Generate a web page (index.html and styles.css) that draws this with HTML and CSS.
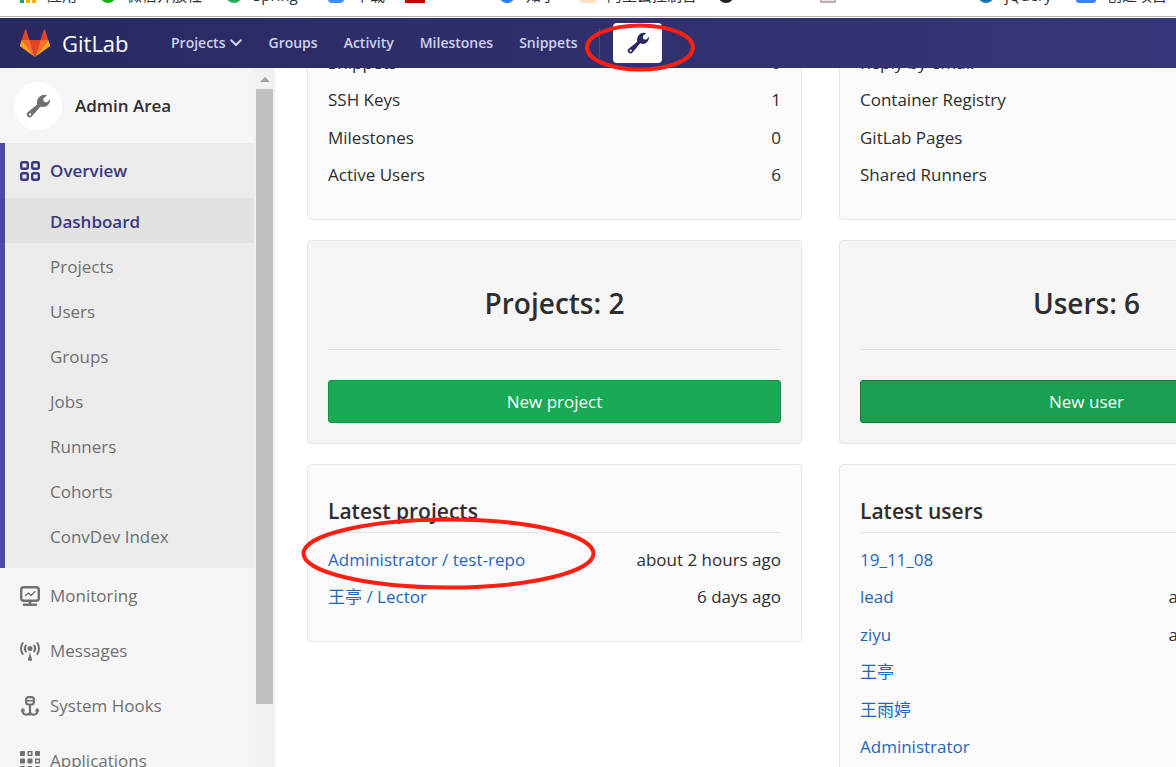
FILE: index.html
```html
<!DOCTYPE html>
<html lang="en">
<head>
    <meta charset="UTF-8">
    <meta name="viewport" content="width=device-width, initial-scale=1.0">
    <title>Admin Area · GitLab</title>
    <link rel="stylesheet" href="styles.css">
</head>
<body>

<!-- shared icons -->
<svg class="sprite" aria-hidden="true">
    <symbol id="wrench" viewBox="0 0 24 24">
        <path fill-rule="evenodd" d="M1.4 18.6 11.2 10.6C10 5.500 13.500.8 18.400.7c1 0 2 .2 2.700.5L17.300 4.400l.4 3.200 3.100.9 3.200-3.300c.2 4.600-2.700 7.800-6.700 7.800-1 0-2-.2-2.900-.6L5.800 22.600c-1.100 1.200-2.900 1.200-4.100.1-1.200-1.200-1.400-3-.3-4.100zM4 19.200a1.200 1.200 0 1 0 0 2.400 1.200 1.200 0 0 0 0-2.400z"/>
    </symbol>
</svg>

<div class="bookmarks">
    <span class="bookmark"><i class="mark apps"></i>应用</span>
    <span class="bookmark"><i class="mark green"></i>微信开放社</span>
    <span class="bookmark"><i class="mark round"></i>Spring</span>
    <span class="bookmark"><i class="mark blue"></i>下载</span>
    <span class="bookmark"><i class="mark red"></i></span>
    <span class="bookmark"><i class="mark ring"></i>知乎</span>
    <span class="bookmark"><i class="mark orange"></i>阿里云控制台</span>
    <span class="bookmark"><i class="mark cat"></i></span>
    <span class="bookmark"><i class="mark box"></i></span>
    <span class="bookmark"><i class="mark wave"></i>jQuery</span>
    <span class="bookmark"><i class="mark square"></i>创建项目</span>
</div>

<header class="navbar">
    <a href="#" class="brand">
        <svg width="30" height="28" viewBox="0 0 30 28">
            <path fill="#e24329" d="M15 28 20.500 11h-11z"/>
            <path fill="#fc6d26" d="M15 28 9.500 11H1.700z"/>
            <path fill="#fca326" d="M1.700 11 0 16.100c-.1.500 0 1 .4 1.300L15 28z"/>
            <path fill="#e24329" d="M1.700 11h7.800L6.100.7c-.2-.5-.9-.5-1.100 0z"/>
            <path fill="#fc6d26" d="M15 28l5.500-17h7.800z"/>
            <path fill="#fca326" d="M28.300 11 30 16.100c.1.500 0 1-.4 1.300L15 28z"/>
            <path fill="#e24329" d="M28.300 11h-7.800L23.900.7c.2-.5.900-.5 1.100 0z"/>
        </svg>
        <span>GitLab</span>
    </a>
    <nav class="nav-links">
        <a href="#" class="dropdown">Projects
            <svg width="12" height="8" viewBox="0 0 12 8"><path d="M1.200 1.200 6 6l4.800-4.800" fill="none" stroke="currentColor" stroke-width="2" stroke-linecap="round" stroke-linejoin="round"/></svg>
        </a>
        <a href="#">Groups</a>
        <a href="#">Activity</a>
        <a href="#">Milestones</a>
        <a href="#">Snippets</a>
    </nav>
    <a href="#" class="admin-link" aria-label="Admin area">
        <svg width="22" height="22"><use href="#wrench"/></svg>
    </a>
</header>

<div class="layout">
    <aside class="sidebar">
        <div class="menu">
            <a href="#" class="context">
                <span class="avatar"><svg width="24" height="24"><use href="#wrench"/></svg></span>
                Admin Area
            </a>
            <div class="section">
                <a href="#" class="item current">
                    <svg width="20" height="20" viewBox="0 0 20 20" fill="none" stroke="currentColor" stroke-width="2.400">
                        <rect x="1.200" y="1.200" width="6.600" height="6.600" rx="1.500"/>
                        <rect x="12.200" y="1.200" width="6.600" height="6.600" rx="1.500"/>
                        <rect x="1.200" y="12.200" width="6.600" height="6.600" rx="1.500"/>
                        <rect x="12.200" y="12.200" width="6.600" height="6.600" rx="1.500"/>
                    </svg>
                    Overview
                </a>
                <ul class="submenu">
                    <li class="active"><a href="#">Dashboard</a></li>
                    <li><a href="#">Projects</a></li>
                    <li><a href="#">Users</a></li>
                    <li><a href="#">Groups</a></li>
                    <li><a href="#">Jobs</a></li>
                    <li><a href="#">Runners</a></li>
                    <li><a href="#">Cohorts</a></li>
                    <li><a href="#">ConvDev Index</a></li>
                </ul>
            </div>
            <a href="#" class="item">
                <svg width="20" height="20" viewBox="0 0 20 20" fill="none" stroke="currentColor">
                    <rect x="1.200" y="1.200" width="17.600" height="13.600" rx="2.500" stroke-width="2.400"/>
                    <path d="M5.500 9.500 8.500 7l2.500 2.500 4-4" stroke-width="1.300" stroke-linecap="round" stroke-linejoin="round"/>
                    <path d="M10 15v3M4 18.700h12" stroke-width="2.500" stroke-linecap="round"/>
                </svg>
                Monitoring
            </a>
            <a href="#" class="item">
                <svg width="20" height="20" viewBox="0 0 20 20" fill="none" stroke="currentColor" stroke-width="2" stroke-linecap="round">
                    <circle cx="10" cy="7.500" r="2.500" fill="currentColor" stroke="none"/>
                    <path d="M10 11.500 8 18.500c-.2.900.3 1.300 1 1.300h2c.7 0 1.200-.4 1-1.300z" fill="currentColor" stroke="none"/>
                    <path d="M5.800 4.500c-1.200 1.800-1.200 4.200 0 6M14.200 4.500c1.200 1.800 1.200 4.200 0 6M2.700 2c-2.200 3-2.200 8 0 11M17.300 2c2.200 3 2.200 8 0 11"/>
                </svg>
                Messages
            </a>
            <a href="#" class="item">
                <svg width="20" height="20" viewBox="0 0 20 20" fill="none" stroke="currentColor" stroke-width="2.200" stroke-linecap="round">
                    <rect x="6.100" y="1.100" width="7.800" height="7.400" rx="2.500"/>
                    <path d="M6.500 4.800h7" stroke-width="1.500"/>
                    <path d="M10 9v9.500M2.500 14.500c.2 2.700 1.600 4.100 3.500 4.100 2.200 0 4-.9 4-2.600 0 1.700 1.800 2.600 4 2.600 1.900 0 3.300-1.400 3.500-4.100"/>
                    <path d="M1.500 14.800 2.800 13l1.500 1.700M15.700 14.700 17.200 13l1.300 1.800" stroke-width="1.500"/>
                </svg>
                System Hooks
            </a>
            <a href="#" class="item">
                <svg width="20" height="20" viewBox="0 0 20 20" fill="currentColor">
                    <rect width="5" height="5" rx="1"/>
                    <rect x="8.200" y=".7" width="3.600" height="3.600" fill="none" stroke="currentColor" stroke-width="1.400"/>
                    <rect x="15" width="5" height="5" rx="1"/>
                    <rect y="7.500" width="5" height="5" rx="1"/>
                    <rect x="7.500" y="7.500" width="5" height="5" rx="1"/>
                    <rect x="15.700" y="8.200" width="3.600" height="3.600" fill="none" stroke="currentColor" stroke-width="1.400"/>
                    <rect y="15" width="5" height="5" rx="1"/>
                    <rect x="7.500" y="15" width="5" height="5" rx="1"/>
                    <rect x="15" y="15" width="5" height="5" rx="1"/>
                </svg>
                Applications
            </a>
        </div>
        <div class="scrollbar">
            <svg class="arrow" width="10" height="5" viewBox="0 0 10 5"><path fill="#a3a3a3" d="M0 5 5 0l5 5z"/></svg>
            <div class="thumb"></div>
        </div>
    </aside>

    <main class="content">
        <div class="cards">
            <section class="card scrolled">
                <ul class="rows">
                    <li><span>Snippets</span><span>0</span></li>
                    <li><span>SSH Keys</span><span>1</span></li>
                    <li><span>Milestones</span><span>0</span></li>
                    <li><span>Active Users</span><span>6</span></li>
                </ul>
            </section>
            <section class="card scrolled">
                <ul class="rows">
                    <li><span>Reply by email</span></li>
                    <li><span>Container Registry</span></li>
                    <li><span>GitLab Pages</span></li>
                    <li><span>Shared Runners</span></li>
                </ul>
            </section>

            <section class="card total">
                <h3>Projects: 2</h3>
                <button type="button">New project</button>
            </section>
            <section class="card total">
                <h3>Users: 6</h3>
                <button type="button" class="pressed">New user</button>
            </section>

            <section class="card">
                <h4>Latest projects</h4>
                <ul class="rows">
                    <li><a href="#">Administrator / test-repo</a><span>about 2 hours ago</span></li>
                    <li><a href="#">王亭 / Lector</a><span>6 days ago</span></li>
                </ul>
            </section>
            <section class="card">
                <h4>Latest users</h4>
                <ul class="rows">
                    <li><a href="#">19_11_08</a></li>
                    <li><a href="#">lead</a><span>about 2 hours ago</span></li>
                    <li><a href="#">ziyu</a><span>about 2 hours ago</span></li>
                    <li><a href="#">王亭</a></li>
                    <li><a href="#">王雨婷</a></li>
                    <li><a href="#">Administrator</a></li>
                </ul>
            </section>
        </div>
    </main>
</div>

<!-- hand-drawn highlights -->
<svg class="highlights" aria-hidden="true">
    <ellipse cx="640" cy="47.500" rx="53" ry="22"/>
    <ellipse cx="448.500" cy="553.500" rx="145" ry="34"/>
</svg>

</body>
</html>
```
FILE: styles.css
```css
* {
    box-sizing: border-box;
}
body {
    display: flex;
    flex-direction: column;
    position: relative;
    height: 100vh;
    margin: 0;
    overflow: hidden;
    background-color: #fff;
    color: #2e2e2e;
    font-family: "Open Sans", "Noto Sans CJK SC", sans-serif;
    font-size: 17px;
    line-height: 24px;
}
a {
    color: #1f68b9;
    text-decoration: none;
}
ul {
    list-style: none;
    margin: 0;
    padding: 0;
}
.sprite {
    display: none;
}

/* browser bookmarks, scrolled almost out of view */
.bookmarks {
    display: grid;
    grid-template-columns: 80px 126px 102px 77px 94px 81px 138px 102px 158px 98px 100px;
    align-content: end;
    flex: none;
    height: 18px;
    padding: 0 0 10px 20px;
    border-bottom: 1px solid #fff;
    box-shadow: inset 0 -1px #b5b1b5;
    overflow: hidden;
    font-size: 15px;
    white-space: nowrap;
}
.bookmark {
    display: flex;
    align-items: center;
    gap: 11px;
    height: 24px;
}
.mark {
    width: 16px;
    height: 16px;
}
.apps {
    background: linear-gradient(90deg, #1aa260 4px, #fff 4px 6px, #fbaf00 6px 10px, #fff 10px 12px, #fbaf00 12px);
}
.green {
    border-radius: 50%;
    background-color: #1aad19;
}
.round {
    border-radius: 50%;
    background-color: #27ae60;
}
.blue {
    border-radius: 4px;
    background-color: #3b8cff;
}
.red {
    width: 20px;
    background-color: #c00;
}
.ring {
    border: 3px solid #2b7de9;
    border-radius: 50%;
}
.orange {
    background-color: #fde0c8;
}
.cat {
    border: 4px solid #222;
    border-radius: 50%;
}
.box {
    border: 2px solid #b5b1b5;
    background-color: #fde0d5;
}
.wave {
    border: 4px solid #1572b6;
    border-radius: 50%;
}
.square {
    width: 20px;
    border-radius: 3px;
    background-color: #3b82ff;
}

/* top bar */
.navbar {
    display: flex;
    align-items: center;
    flex: none;
    height: 50px;
    padding-left: 20px;
    background: linear-gradient(90deg, #292961, #36367a);
}
.brand {
    display: flex;
    align-items: center;
    gap: 12px;
    width: 151px;
    color: #fff;
    font-size: 22px;
}
.nav-links {
    display: flex;
    align-items: center;
    gap: 26px;
    width: 429px;
    height: 30px;
    border-right: 1px solid #4b4b8c;
}
.nav-links a {
    color: #d1d1f0;
    font-size: 14px;
    font-weight: 600;
    white-space: nowrap;
}
.nav-links .dropdown {
    display: flex;
    align-items: center;
    gap: 5px;
}
.admin-link {
    display: flex;
    align-items: center;
    justify-content: center;
    width: 49px;
    height: 40px;
    margin-left: 13px;
    border-radius: 4px;
    background-color: #fff;
    fill: #292961;
}

.layout {
    display: flex;
    flex: 1;
    min-height: 0;
}

/* left menu */
.sidebar {
    display: flex;
    flex: none;
    width: 275px;
    overflow: hidden;
    background-color: #f5f5f5;
}
.menu {
    flex: 1;
}
.context {
    display: flex;
    align-items: center;
    gap: 13px;
    height: 75px;
    padding-left: 14px;
    color: #2e2e2e;
    font-weight: 600;
}
.avatar {
    display: flex;
    align-items: center;
    justify-content: center;
    width: 48px;
    height: 48px;
    border-radius: 50%;
    background-color: #fff;
    fill: #707070;
}
.section {
    padding-bottom: 10px;
    background-color: #ebebeb;
    box-shadow: inset 5px 0 #4b4ba3;
}
.item {
    display: flex;
    align-items: center;
    gap: 10px;
    height: 55px;
    padding-left: 20px;
    color: #707070;
}
.submenu a {
    display: block;
    padding: 12px 0 9px 50px;
    color: #707070;
}
.submenu .active {
    background-color: rgba(0, 0, 0, 0.04);
}
.submenu .active a,
.item.current {
    color: #393982;
    font-weight: 600;
}
.scrollbar {
    display: flex;
    flex-direction: column;
    align-items: center;
    gap: 7px;
    width: 21px;
    padding: 9px 0 63px;
    background-color: #f1f1f1;
}
.arrow {
    flex: none;
}
.thumb {
    flex: 1;
    width: 17px;
    background-color: #c1c1c1;
}

/* dashboard */
.content {
    flex: 1;
    min-width: 0;
    overflow: hidden;
}
.cards {
    display: grid;
    grid-template-columns: repeat(2, minmax(495px, 1fr));
    align-items: start;
    gap: 20px 37px;
    margin-top: -25px;
    padding-left: 32px;
}
.card {
    padding: 20px 20px 25px;
    border: 1px solid #e5e5e5;
    border-radius: 4px;
    background-color: #fafafa;
}
.card.scrolled {
    padding-top: 0;
}
.card h4 {
    margin: 0 0 8px;
    padding: 10px 0 5px;
    border-bottom: 1px solid #e5e5e5;
    font-size: 21px;
    font-weight: 600;
    line-height: 32px;
}
.rows li {
    display: flex;
    align-items: center;
    justify-content: space-between;
    height: 37px;
    white-space: nowrap;
}
.rows li:nth-child(even) {
    height: 38px;
}
.card.total {
    padding-bottom: 20px;
    background-color: #f5f5f5;
    text-align: center;
}
.total h3 {
    margin: 0 0 30px;
    padding: 22px 0 26px;
    border-bottom: 1px solid #e0e0e0;
    font-size: 28px;
    font-weight: 600;
    line-height: 40px;
}
.total button {
    display: block;
    width: 100%;
    height: 43px;
    border: 1px solid #168f48;
    border-radius: 3px;
    background-color: #1aaa55;
    color: #fff;
    font-family: inherit;
    font-size: 17px;
    cursor: pointer;
}
.total .pressed {
    border-color: #12753a;
    background-color: #1aa050;
}

.highlights {
    position: absolute;
    top: 0;
    left: 0;
    width: 100%;
    height: 100%;
    fill: none;
    stroke: #ff1f12;
    stroke-width: 4;
    pointer-events: none;
}
```
